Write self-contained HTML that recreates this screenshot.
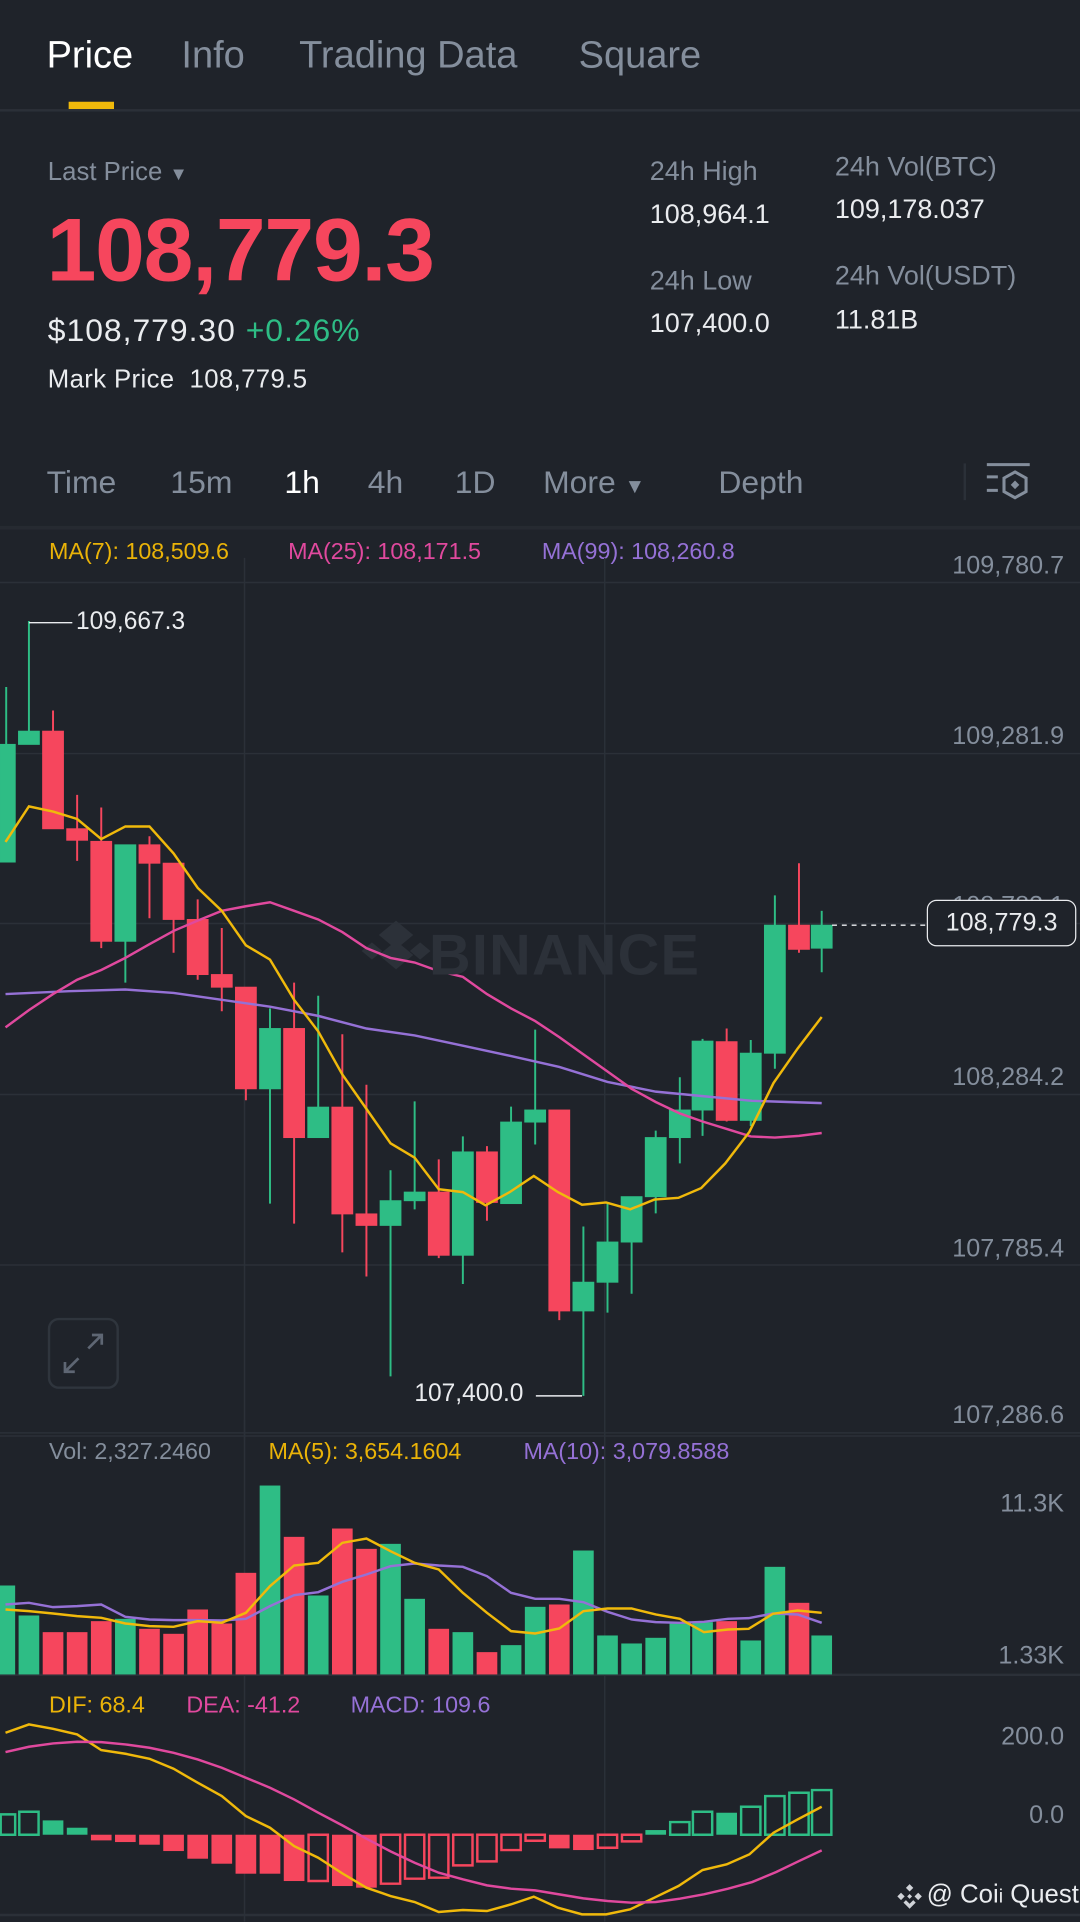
<!DOCTYPE html>
<html><head><meta charset="utf-8"><style>
html,body{margin:0;padding:0;background:#1f232a;overflow:hidden}
body{width:1080px;height:1922px}
#w{position:absolute;left:0;top:0;width:881px;height:1568px;transform:scale(1.22588);transform-origin:0 0;background:#1f232a;font-family:"Liberation Sans",sans-serif;color:#eaecef}
.t{position:absolute;white-space:nowrap;line-height:1.2}
.g{color:#848e9c}
.r{font-size:20.5px}
svg{position:absolute;left:0}
</style></head><body><div id="w">
<div class="t" style="left:38px;top:26px;font-size:31px;color:#fff">Price</div>
<div class="t g" style="left:148px;top:26px;font-size:31px">Info</div>
<div class="t g" style="left:244px;top:26px;font-size:31px">Trading Data</div>
<div class="t g" style="left:472px;top:26px;font-size:31px">Square</div>
<div style="position:absolute;left:56px;top:83px;width:37px;height:6px;background:#f0b90b"></div>
<div style="position:absolute;left:0;top:89px;width:881px;height:2px;background:#2b3038"></div>

<div class="t g" style="left:39px;top:128px;font-size:21px">Last Price <span style="font-size:15px">&#9660;</span></div>
<div class="t" style="left:38px;top:161px;font-size:73px;font-weight:bold;color:#f6465d;letter-spacing:-1px">108,779.3</div>
<div class="t" style="left:39px;top:254px;font-size:26px;letter-spacing:0.8px">$108,779.30 <span style="color:#2ebd85">+0.26%</span></div>
<div class="t" style="left:39px;top:297px;font-size:21px;letter-spacing:0.3px">Mark Price&nbsp;&nbsp;108,779.5</div>

<div class="t g" style="left:530px;top:127px;font-size:22px">24h High</div>
<div class="t" style="left:530px;top:162px;font-size:22px">108,964.1</div>
<div class="t g" style="left:530px;top:216px;font-size:22px">24h Low</div>
<div class="t" style="left:530px;top:251px;font-size:22px">107,400.0</div>
<div class="t g" style="left:681px;top:123px;font-size:22px">24h Vol(BTC)</div>
<div class="t" style="left:681px;top:158px;font-size:22px">109,178.037</div>
<div class="t g" style="left:681px;top:212px;font-size:22px">24h Vol(USDT)</div>
<div class="t" style="left:681px;top:248px;font-size:22px">11.81B</div>

<div class="t g" style="left:38px;top:378px;font-size:26px">Time</div>
<div class="t g" style="left:139px;top:378px;font-size:26px">15m</div>
<div class="t" style="left:232px;top:378px;font-size:26px;color:#fff">1h</div>
<div class="t g" style="left:300px;top:378px;font-size:26px">4h</div>
<div class="t g" style="left:371px;top:378px;font-size:26px">1D</div>
<div class="t g" style="left:443px;top:378px;font-size:26px">More <span style="font-size:17px">&#9660;</span></div>
<div class="t g" style="left:586px;top:378px;font-size:26px">Depth</div>
<div style="position:absolute;left:786px;top:378px;width:2px;height:30px;background:#2b3038"></div>
<svg style="left:800px;top:374px" width="44" height="38" viewBox="0 0 44 38" fill="none" stroke="#848e9c" stroke-width="2.5">
<line x1="5" y1="5" x2="40" y2="5"/><line x1="5" y1="15" x2="14" y2="15"/><line x1="5" y1="26" x2="14" y2="26"/>
<path d="M28 11 L37 16 L37 27 L28 32 L19 27 L19 16 Z"/><path d="M28 18 L31.5 21.5 L28 25 L24.5 21.5Z" fill="#848e9c" stroke="none"/>
</svg>
<div style="position:absolute;left:0;top:429px;width:881px;height:3px;background:#262a31"></div>

<div class="t" style="left:40px;top:440px;font-size:19px;color:#eab308">MA(7): 108,509.6</div>
<div class="t" style="left:235px;top:440px;font-size:19px;color:#e0499e">MA(25): 108,171.5</div>
<div class="t" style="left:442px;top:440px;font-size:19px;color:#9571d6">MA(99): 108,260.8</div>

<svg style="top:440.5px" width="881" height="734.2" viewBox="0 0 1568 1568" preserveAspectRatio="none">
<g stroke="#2b3038" stroke-width="1.2">
<line x1="0" y1="73" x2="1568" y2="73" vector-effect="non-scaling-stroke"/>
<line x1="0" y1="371" x2="1568" y2="371" vector-effect="non-scaling-stroke"/>
<line x1="0" y1="667" x2="1568" y2="667" vector-effect="non-scaling-stroke"/>
<line x1="0" y1="965" x2="1568" y2="965" vector-effect="non-scaling-stroke"/>
<line x1="0" y1="1262" x2="1568" y2="1262" vector-effect="non-scaling-stroke"/>
<line x1="0" y1="1560" x2="1568" y2="1560" vector-effect="non-scaling-stroke"/>
<line x1="355" y1="30" x2="355" y2="1568" vector-effect="non-scaling-stroke"/>
<line x1="878" y1="30" x2="878" y2="1568" vector-effect="non-scaling-stroke"/>
</g>
<g fill="#2c3139"><path d="M575 662 L600 687 L575 712 L550 687Z M575 697 L600 722 L575 747 L550 722Z M540 700 L555 715 L540 730 L525 715Z M610 700 L625 715 L610 730 L595 715Z" /></g>
<g stroke-width="1.6">
<g fill="#2ebd85" stroke="#2ebd85">
<line x1="9" y1="255" x2="9" y2="560" vector-effect="non-scaling-stroke"/><rect x="0" y="355" width="22" height="205"/>
<line x1="42" y1="140" x2="42" y2="355" vector-effect="non-scaling-stroke"/><rect x="27" y="332" width="30" height="23"/>
<line x1="182" y1="530" x2="182" y2="770" vector-effect="non-scaling-stroke"/><rect x="167" y="530" width="30" height="168"/>
<line x1="392" y1="815" x2="392" y2="1155" vector-effect="non-scaling-stroke"/><rect x="377" y="850" width="30" height="105"/>
<line x1="462" y1="793" x2="462" y2="1040" vector-effect="non-scaling-stroke"/><rect x="447" y="987" width="30" height="53"/>
<line x1="567" y1="1097" x2="567" y2="1456" vector-effect="non-scaling-stroke"/><rect x="552" y="1150" width="30" height="43"/>
<line x1="602" y1="977" x2="602" y2="1165" vector-effect="non-scaling-stroke"/><rect x="587" y="1135" width="30" height="15"/>
<line x1="672" y1="1038" x2="672" y2="1295" vector-effect="non-scaling-stroke"/><rect x="657" y="1065" width="30" height="180"/>
<line x1="742" y1="986" x2="742" y2="1155" vector-effect="non-scaling-stroke"/><rect x="727" y="1013" width="30" height="142"/>
<line x1="777" y1="852" x2="777" y2="1052" vector-effect="non-scaling-stroke"/><rect x="762" y="992" width="30" height="21"/>
<line x1="847" y1="1195" x2="847" y2="1490" vector-effect="non-scaling-stroke"/><rect x="832" y="1292" width="30" height="50"/>
<line x1="882" y1="1155" x2="882" y2="1345" vector-effect="non-scaling-stroke"/><rect x="867" y="1222" width="30" height="70"/>
<line x1="917" y1="1143" x2="917" y2="1312" vector-effect="non-scaling-stroke"/><rect x="902" y="1143" width="30" height="79"/>
<line x1="952" y1="1028" x2="952" y2="1172" vector-effect="non-scaling-stroke"/><rect x="937" y="1040" width="30" height="103"/>
<line x1="987" y1="935" x2="987" y2="1085" vector-effect="non-scaling-stroke"/><rect x="972" y="992" width="30" height="48"/>
<line x1="1020" y1="868" x2="1020" y2="1037" vector-effect="non-scaling-stroke"/><rect x="1005" y="872" width="30" height="120"/>
<line x1="1090" y1="870" x2="1090" y2="1020" vector-effect="non-scaling-stroke"/><rect x="1075" y="893" width="30" height="117"/>
<line x1="1125" y1="618" x2="1125" y2="920" vector-effect="non-scaling-stroke"/><rect x="1110" y="670" width="30" height="223"/>
<line x1="1193" y1="645" x2="1193" y2="752" vector-effect="non-scaling-stroke"/><rect x="1178" y="670" width="30" height="40"/>
</g>
<g fill="#f6465d" stroke="#f6465d">
<line x1="77" y1="296" x2="77" y2="502" vector-effect="non-scaling-stroke"/><rect x="62" y="332" width="30" height="170"/>
<line x1="112" y1="443" x2="112" y2="558" vector-effect="non-scaling-stroke"/><rect x="97" y="502" width="30" height="20"/>
<line x1="147" y1="465" x2="147" y2="710" vector-effect="non-scaling-stroke"/><rect x="132" y="524" width="30" height="174"/>
<line x1="217" y1="515" x2="217" y2="658" vector-effect="non-scaling-stroke"/><rect x="202" y="530" width="30" height="32"/>
<line x1="252" y1="562" x2="252" y2="718" vector-effect="non-scaling-stroke"/><rect x="237" y="562" width="30" height="98"/>
<line x1="287" y1="625" x2="287" y2="765" vector-effect="non-scaling-stroke"/><rect x="272" y="660" width="30" height="96"/>
<line x1="322" y1="675" x2="322" y2="820" vector-effect="non-scaling-stroke"/><rect x="307" y="756" width="30" height="22"/>
<line x1="357" y1="778" x2="357" y2="975" vector-effect="non-scaling-stroke"/><rect x="342" y="778" width="30" height="177"/>
<line x1="427" y1="770" x2="427" y2="1190" vector-effect="non-scaling-stroke"/><rect x="412" y="850" width="30" height="190"/>
<line x1="497" y1="860" x2="497" y2="1240" vector-effect="non-scaling-stroke"/><rect x="482" y="987" width="30" height="186"/>
<line x1="532" y1="948" x2="532" y2="1282" vector-effect="non-scaling-stroke"/><rect x="517" y="1173" width="30" height="20"/>
<line x1="637" y1="1078" x2="637" y2="1250" vector-effect="non-scaling-stroke"/><rect x="622" y="1135" width="30" height="110"/>
<line x1="707" y1="1055" x2="707" y2="1185" vector-effect="non-scaling-stroke"/><rect x="692" y="1065" width="30" height="88"/>
<line x1="812" y1="992" x2="812" y2="1358" vector-effect="non-scaling-stroke"/><rect x="797" y="992" width="30" height="350"/>
<line x1="1055" y1="850" x2="1055" y2="1012" vector-effect="non-scaling-stroke"/><rect x="1040" y="873" width="30" height="137"/>
<line x1="1160" y1="562" x2="1160" y2="718" vector-effect="non-scaling-stroke"/><rect x="1145" y="670" width="30" height="42"/>
</g>
</g>
<g fill="none" stroke-width="2">
<polyline vector-effect="non-scaling-stroke" stroke="#9571d6" points="8,790 100,785 182,782 252,788 322,800 392,812 462,828 532,850 602,862 672,880 742,898 812,917 882,943 952,960 1022,968 1092,976 1193,980"/>
<polyline vector-effect="non-scaling-stroke" stroke="#e0499e" points="8,848 42,818 77,790 112,765 147,748 182,727 217,703 252,680 287,662 322,645 357,637 392,630 427,645 462,660 497,682 532,710 567,727 602,735 637,750 672,760 707,790 742,815 777,837 812,865 847,895 882,925 917,955 952,978 987,998 1020,1012 1055,1025 1090,1038 1125,1040 1160,1037 1193,1032"/>
<polyline vector-effect="non-scaling-stroke" stroke="#f0b90b" points="8,525 42,463 77,472 112,485 147,520 182,498 217,498 252,545 287,605 322,645 357,705 392,730 427,800 462,855 497,930 532,990 567,1050 602,1075 637,1130 672,1135 705,1158 740,1135 775,1107 810,1135 845,1157 880,1153 915,1165 950,1148 985,1145 1018,1128 1053,1085 1088,1030 1123,945 1158,885 1193,830"/>
<line vector-effect="non-scaling-stroke" stroke="#eaecef" stroke-width="1.2" x1="42" y1="143" x2="105" y2="143"/>
<line vector-effect="non-scaling-stroke" stroke="#eaecef" stroke-width="1.2" x1="778" y1="1490" x2="845" y2="1490"/>
<line vector-effect="non-scaling-stroke" stroke="#eaecef" stroke-width="1.2" stroke-dasharray="4 4" x1="1208" y1="670" x2="1347" y2="670"/>
</g>
</svg>
<div class="t" style="left:350px;top:751px;font-size:47px;font-weight:bold;color:#2c3139;letter-spacing:1px">BINANCE</div>
<div class="t" style="left:62px;top:495px;font-size:20px">109,667.3</div>
<div class="t" style="left:338px;top:1125px;font-size:20px">107,400.0</div>
<div class="t g r" style="right:13px;top:450px">109,780.7</div>
<div class="t g r" style="right:13px;top:589px">109,281.9</div>
<div class="t g r" style="right:13px;top:727px">108,783.1</div>
<div class="t g r" style="right:13px;top:867px">108,284.2</div>
<div class="t g r" style="right:13px;top:1007px">107,785.4</div>
<div class="t g r" style="right:13px;top:1143px">107,286.6</div>
<div class="t" style="left:756px;top:734px;width:120px;height:36px;border:1.5px solid #eaecef;border-radius:8px;background:#1f232a;font-size:20.5px;line-height:36px;text-align:center">108,779.3</div>
<div style="position:absolute;left:39px;top:1075px;width:54px;height:54px;border:2px solid #2f353d;border-radius:9px"></div>
<svg style="left:39px;top:1075px" width="58" height="58" viewBox="0 0 58 58" fill="none" stroke="#5e6673" stroke-width="2.2">
<path d="M33 25 L44 14 M36 14 L44 14 L44 22 M25 33 L14 44 M14 36 L14 44 L22 44"/></svg>

<div class="t g" style="left:40px;top:1174px;font-size:19px">Vol: 2,327.2460</div>
<div class="t" style="left:219px;top:1174px;font-size:19px;color:#eab308">MA(5): 3,654.1604</div>
<div class="t" style="left:427px;top:1174px;font-size:19px;color:#9571d6">MA(10): 3,079.8588</div>
<div class="t g r" style="right:13px;top:1215px">11.3K</div>
<div class="t g r" style="right:13px;top:1339px">1.33K</div>
<svg style="top:1158.4px" width="881" height="409.6" viewBox="0 0 1568 1507" preserveAspectRatio="none">
<g stroke="#2b3038" stroke-width="1.2">
<line vector-effect="non-scaling-stroke" x1="355" y1="0" x2="355" y2="1507"/>
<line vector-effect="non-scaling-stroke" x1="878" y1="0" x2="878" y2="1507"/>
<line vector-effect="non-scaling-stroke" x1="0" y1="40" x2="1568" y2="40"/>
<line vector-effect="non-scaling-stroke" x1="0" y1="766" x2="1568" y2="766" stroke-width="2"/>
<line vector-effect="non-scaling-stroke" x1="0" y1="1487" x2="1568" y2="1487" stroke-width="2"/>
</g>
<g fill="#2ebd85">
<rect x="0" y="498" width="22" height="267"/><rect x="27" y="588" width="30" height="177"/><rect x="167" y="598" width="30" height="167"/>
<rect x="377" y="198" width="30" height="567"/><rect x="447" y="528" width="30" height="237"/><rect x="552" y="373" width="30" height="392"/>
<rect x="587" y="538" width="30" height="227"/><rect x="657" y="638" width="30" height="127"/><rect x="727" y="677" width="30" height="88"/>
<rect x="762" y="562" width="30" height="203"/><rect x="832" y="393" width="30" height="372"/><rect x="867" y="648" width="30" height="117"/>
<rect x="902" y="672" width="30" height="93"/><rect x="937" y="655" width="30" height="110"/><rect x="972" y="612" width="30" height="153"/>
<rect x="1005" y="608" width="30" height="157"/><rect x="1075" y="663" width="30" height="102"/><rect x="1110" y="442" width="30" height="323"/>
<rect x="1178" y="648" width="30" height="117"/>
</g>
<g fill="#f6465d">
<rect x="62" y="638" width="30" height="127"/><rect x="97" y="638" width="30" height="127"/><rect x="132" y="605" width="30" height="160"/>
<rect x="202" y="628" width="30" height="137"/><rect x="237" y="643" width="30" height="122"/><rect x="272" y="570" width="30" height="195"/>
<rect x="307" y="612" width="30" height="153"/><rect x="342" y="460" width="30" height="305"/><rect x="412" y="352" width="30" height="413"/>
<rect x="482" y="327" width="30" height="438"/><rect x="517" y="388" width="30" height="377"/><rect x="622" y="628" width="30" height="137"/>
<rect x="692" y="698" width="30" height="67"/><rect x="797" y="555" width="30" height="210"/><rect x="1040" y="605" width="30" height="160"/>
<rect x="1145" y="550" width="30" height="215"/>
</g>
<g fill="none" stroke-width="2">
<polyline vector-effect="non-scaling-stroke" stroke="#9571d6" points="8,555 42,550 77,563 112,560 147,555 182,592 217,600 252,602 287,602 322,603 357,598 392,560 427,527 462,518 497,487 532,465 567,440 602,432 637,438 672,442 707,470 742,520 777,538 812,538 847,548 882,577 917,600 952,608 987,610 1022,607 1057,598 1087,596 1122,582 1158,585 1193,610"/>
<polyline vector-effect="non-scaling-stroke" stroke="#f0b90b" points="8,570 42,575 77,582 112,590 147,595 182,612 217,620 252,622 287,605 322,610 357,580 392,500 427,438 462,430 497,370 532,357 567,395 602,430 637,450 672,520 707,580 742,635 777,642 812,627 847,575 882,567 917,567 952,585 987,598 1022,638 1057,630 1087,628 1122,583 1158,573 1193,580"/>
</g>
<g fill="#2ebd85"><rect x="62" y="1203" width="30" height="43"/><rect x="97" y="1225" width="30" height="21"/><rect x="937" y="1232" width="30" height="14"/><rect x="1040" y="1180" width="30" height="66"/></g>
<g fill="none" stroke="#2ebd85" stroke-width="2">
<rect vector-effect="non-scaling-stroke" x="1" y="1185" width="21" height="61"/><rect vector-effect="non-scaling-stroke" x="28" y="1177" width="28" height="69"/>
<rect vector-effect="non-scaling-stroke" x="973" y="1208" width="28" height="38"/><rect vector-effect="non-scaling-stroke" x="1006" y="1177" width="28" height="69"/>
<rect vector-effect="non-scaling-stroke" x="1076" y="1162" width="28" height="84"/><rect vector-effect="non-scaling-stroke" x="1111" y="1130" width="28" height="116"/>
<rect vector-effect="non-scaling-stroke" x="1146" y="1120" width="28" height="126"/><rect vector-effect="non-scaling-stroke" x="1179" y="1112" width="28" height="134"/>
</g>
<g fill="#f6465d">
<rect x="132" y="1246" width="30" height="17"/><rect x="167" y="1246" width="30" height="22"/><rect x="202" y="1246" width="30" height="30"/>
<rect x="237" y="1246" width="30" height="49"/><rect x="272" y="1246" width="30" height="72"/><rect x="307" y="1246" width="30" height="87"/>
<rect x="342" y="1246" width="30" height="117"/><rect x="377" y="1246" width="30" height="117"/><rect x="412" y="1246" width="30" height="139"/>
<rect x="482" y="1246" width="30" height="154"/><rect x="517" y="1246" width="30" height="159"/><rect x="797" y="1246" width="30" height="41"/>
<rect x="832" y="1246" width="30" height="46"/>
</g>
<g fill="none" stroke="#f6465d" stroke-width="2">
<rect vector-effect="non-scaling-stroke" x="448" y="1246" width="28" height="139"/><rect vector-effect="non-scaling-stroke" x="553" y="1246" width="28" height="147"/>
<rect vector-effect="non-scaling-stroke" x="588" y="1246" width="28" height="132"/><rect vector-effect="non-scaling-stroke" x="623" y="1246" width="28" height="129"/>
<rect vector-effect="non-scaling-stroke" x="658" y="1246" width="28" height="92"/><rect vector-effect="non-scaling-stroke" x="693" y="1246" width="28" height="80"/>
<rect vector-effect="non-scaling-stroke" x="728" y="1246" width="28" height="46"/><rect vector-effect="non-scaling-stroke" x="763" y="1246" width="28" height="18"/>
<rect vector-effect="non-scaling-stroke" x="868" y="1246" width="28" height="39"/><rect vector-effect="non-scaling-stroke" x="903" y="1246" width="28" height="20"/>
</g>
<g fill="none" stroke-width="2">
<polyline vector-effect="non-scaling-stroke" stroke="#f0b90b" points="8,940 42,915 77,928 112,945 147,992 182,1003 217,1018 252,1048 287,1090 322,1130 357,1190 392,1225 427,1280 462,1315 497,1362 532,1405 567,1430 602,1448 637,1478 672,1472 707,1475 742,1455 775,1432 810,1465 845,1485 880,1485 915,1470 950,1435 985,1400 1020,1352 1055,1335 1088,1305 1123,1240 1158,1200 1193,1162"/>
<polyline vector-effect="non-scaling-stroke" stroke="#e0499e" points="8,998 42,982 77,972 112,967 147,968 182,975 217,985 252,1000 287,1020 322,1045 357,1075 392,1105 427,1140 462,1180 497,1218 532,1258 567,1296 602,1330 637,1360 672,1380 707,1398 742,1408 777,1413 812,1425 847,1437 882,1445 917,1450 952,1448 987,1438 1022,1425 1057,1408 1092,1388 1127,1358 1160,1325 1193,1293"/>
</g>
</svg>
<div class="t" style="left:40px;top:1381px;font-size:19px;color:#eab308">DIF: 68.4</div>
<div class="t" style="left:152px;top:1381px;font-size:19px;color:#e0499e">DEA: -41.2</div>
<div class="t" style="left:286px;top:1381px;font-size:19px;color:#9571d6">MACD: 109.6</div>
<div class="t g r" style="right:13px;top:1405px">200.0</div>
<div class="t g r" style="right:13px;top:1469px">0.0</div>
<svg style="left:731px;top:1536px" width="22" height="22" viewBox="0 0 22 22" fill="#d0d3d8"><path d="M11 1L14 4 11 7 8 4Z M4 8L7 11 4 14 1 11Z M18 8L21 11 18 14 15 11Z M11 9L13 11 11 13 9 11Z M11 21L16 16 14 14 11 17 8 14 6 16Z"/></svg>
<div class="t" style="left:756px;top:1533px;font-size:21px;color:#eaecef">@ Coi<span style="font-size:16px">i</span> Quest</div>
</div></body></html>
